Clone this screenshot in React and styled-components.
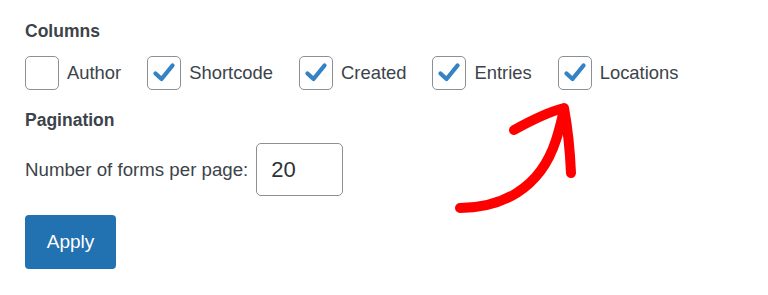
import styled, { createGlobalStyle } from "styled-components";

const Global = createGlobalStyle`
  body {
    margin: 0;
    background: #fff;
    font-family: "Liberation Sans", Arial, sans-serif;
    color: #3c434a;
  }
`;

const Page = styled.div`
  position: relative;
  width: 768px;
  height: 295px;
  padding: 20px 25px 0;
  box-sizing: border-box;
  overflow: hidden;
`;

const Heading = styled.h3`
  margin: 0;
  font-size: 17.5px;
  font-weight: 700;
  line-height: 22px;
  color: #3c434a;
`;

const CheckRow = styled.div`
  display: flex;
  align-items: center;
  gap: 26px;
  margin: 14px 0 19px;
`;

const Option = styled.label`
  display: flex;
  align-items: center;
  gap: 8px;
  font-size: 18.4px;
`;

const Box = styled.span`
  width: 34px;
  height: 34px;
  box-sizing: border-box;
  border: 1.5px solid #8c8f94;
  border-radius: 5px;
  display: flex;
  align-items: center;
  justify-content: center;
  background: #fff;
`;

const PerPage = styled.div`
  display: flex;
  align-items: center;
  gap: 8px;
  margin-top: 12px;
  font-size: 18.7px;
`;

const NumberInput = styled.div`
  width: 87px;
  height: 53px;
  box-sizing: border-box;
  border: 1.5px solid #8c8f94;
  border-radius: 5px;
  padding-left: 14px;
  display: flex;
  align-items: center;
  font-size: 22px;
  color: #2c3338;
`;

const Button = styled.button`
  margin-top: 19px;
  width: 91px;
  height: 54px;
  border: none;
  border-radius: 4px;
  background: #2271b1;
  color: #fff;
  font-family: inherit;
  font-size: 19px;
`;

const Arrow = styled.svg`
  position: absolute;
  left: 0;
  top: 0;
  pointer-events: none;
`;

const Check = () => (
  <svg width="24" height="24" viewBox="0 0 24 24">
    <path
      d="M3.5 12.5 L9.5 18 L20.5 4.5"
      fill="none"
      stroke="#3582c4"
      strokeWidth="4.3"
      strokeLinecap="round"
      strokeLinejoin="round"
    />
  </svg>
);

const columns = [
  { name: "Author", on: false },
  { name: "Shortcode", on: true },
  { name: "Created", on: true },
  { name: "Entries", on: true },
  { name: "Locations", on: true },
];

export default function App() {
  return (
    <Page>
      <Global />
      <Heading>Columns</Heading>
      <CheckRow>
        {columns.map((c) => (
          <Option key={c.name}>
            <Box>{c.on && <Check />}</Box>
            {c.name}
          </Option>
        ))}
      </CheckRow>
      <Heading>Pagination</Heading>
      <PerPage>
        Number of forms per page:
        <NumberInput>20</NumberInput>
      </PerPage>
      <Button>Apply</Button>
      <Arrow width="768" height="295">
        <g fill="none" stroke="#ff0000" strokeWidth="10" strokeLinecap="round" strokeLinejoin="round">
          <path d="M460 208 C500 208 540 190 556 140 C560 128 562 118 564 110" />
          <path d="M514 130 C532 120 548 112 564 108 C568 130 570 150 571 173" />
        </g>
      </Arrow>
    </Page>
  );
}
